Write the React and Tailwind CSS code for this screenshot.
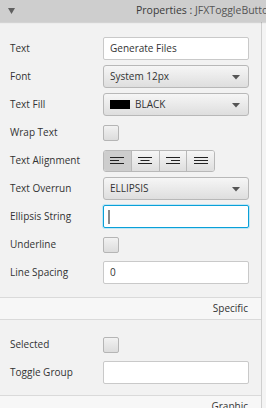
import React from "react";

const font = { fontFamily: '"Open Sans", "Noto Sans", sans-serif' };

function Row({ label, children }) {
  return (
    <div className="flex h-[23px] items-center">
      <div className="w-[93px] shrink-0 text-[10px] text-[#333333]">{label}</div>
      <div className="flex h-full w-[146px] items-center">{children}</div>
    </div>
  );
}

function Input({ value, focused }) {
  if (focused) {
    return (
      <div className="flex h-[23px] w-full items-center rounded-[2px] border border-[#0aa0d8] bg-white pl-[4px] shadow-[0_0_0_1px_#bfe6f5]">
        <div className="h-[14px] w-[2px] bg-[#8a8a8a]" />
      </div>
    );
  }
  return (
    <div className="flex h-[23px] w-full items-center rounded-[2px] border border-[#c9c9c9] bg-white pl-[6px] text-[10px] text-[#333333]">
      {value}
    </div>
  );
}

function Arrow() {
  return (
    <svg width="8" height="5" viewBox="0 0 8 5" className="absolute right-[8px] top-[9px]">
      <path d="M0 0 L8 0 L4 4.5 Z" fill="#555" />
    </svg>
  );
}

function Combo({ children }) {
  return (
    <div className="relative flex h-[23px] w-full items-center rounded-[3px] border border-[#b8b8b8] bg-gradient-to-b from-[#f6f6f6] to-[#dedede] pl-[6px] text-[10px] text-[#333333]">
      {children}
      <Arrow />
    </div>
  );
}

function Check() {
  return (
    <div className="h-[16px] w-[16px] rounded-[2px] border border-[#b5b5b5] bg-gradient-to-b from-[#f2f2f2] to-[#dcdcdc]" />
  );
}

function AlignIcon({ type }) {
  const short = type === "justify" ? 14 : 9;
  const x = type === "left" ? 0 : type === "center" ? 2.5 : type === "right" ? 5 : 0;
  return (
    <svg width="14" height="7" viewBox="0 0 14 7">
      <rect x="0" y="0" width="14" height="1" fill="#222" />
      <rect x={x} y="3" width={short} height="1" fill="#222" />
      <rect x="0" y="6" width="14" height="1" fill="#222" />
    </svg>
  );
}

function AlignGroup() {
  const types = ["left", "center", "right", "justify"];
  return (
    <div className="flex h-[22px] w-[112px] overflow-hidden rounded-[3px] border border-[#b8b8b8]">
      {types.map((t, i) => (
        <div
          key={t}
          className={
            "flex h-full flex-1 items-center justify-center " +
            (i > 0 ? "border-l border-[#b8b8b8] " : "") +
            (i === 0 ? "bg-[#cdcdcd]" : "bg-gradient-to-b from-[#f6f6f6] to-[#dedede]")
          }
        >
          <AlignIcon type={t} />
        </div>
      ))}
    </div>
  );
}

function SectionHeader({ title }) {
  return (
    <div className="flex h-[23px] items-center justify-end border-b border-t border-[#dadada] bg-[#f7f7f7] pr-[13px] text-[10px] text-[#333333]">
      {title}
    </div>
  );
}

export default function App() {
  return (
    <div style={font} className="relative h-[408px] w-[266px] overflow-hidden bg-[#f2f2f2]">
      <div className="relative flex h-[22px] items-center bg-[#cecece] shadow-[0_1px_1px_rgba(0,0,0,0.12)]">
        <svg width="7" height="6" viewBox="0 0 7 6" className="absolute left-[8px] top-[8px]">
          <path d="M0 0 L7 0 L3.5 6 Z" fill="#606060" />
        </svg>
        <div className="whitespace-nowrap pl-[136px] text-[10.5px] text-[#3a3a3a]">
          Properties : <span className="text-[#555555]">JFXToggleButton</span>
        </div>
      </div>
      <div className="flex">
        <div className="w-[262px] shrink-0 border-r border-[#cfcfcf]">
          <div className="flex flex-col gap-[5px] pb-[13px] pl-[10px] pt-[15px]">
            <Row label="Text"><Input value="Generate Files" /></Row>
            <Row label="Font"><Combo>System 12px</Combo></Row>
            <Row label="Text Fill">
              <Combo>
                <div className="mr-[5px] h-[9px] w-[20px] bg-black" />
                BLACK
              </Combo>
            </Row>
            <Row label="Wrap Text"><Check /></Row>
            <Row label="Text Alignment"><AlignGroup /></Row>
            <Row label="Text Overrun"><Combo>ELLIPSIS</Combo></Row>
            <Row label="Ellipsis String"><Input focused /></Row>
            <Row label="Underline"><Check /></Row>
            <Row label="Line Spacing"><Input value="0" /></Row>
          </div>
          <SectionHeader title="Specific" />
          <div className="flex flex-col gap-[5px] pb-[11px] pl-[10px] pt-[13px]">
            <Row label="Selected"><Check /></Row>
            <Row label="Toggle Group"><Input value="" /></Row>
          </div>
          <SectionHeader title="Graphic" />
        </div>
        <div className="flex-1 bg-[#f4f4f4]" />
      </div>
    </div>
  );
}
